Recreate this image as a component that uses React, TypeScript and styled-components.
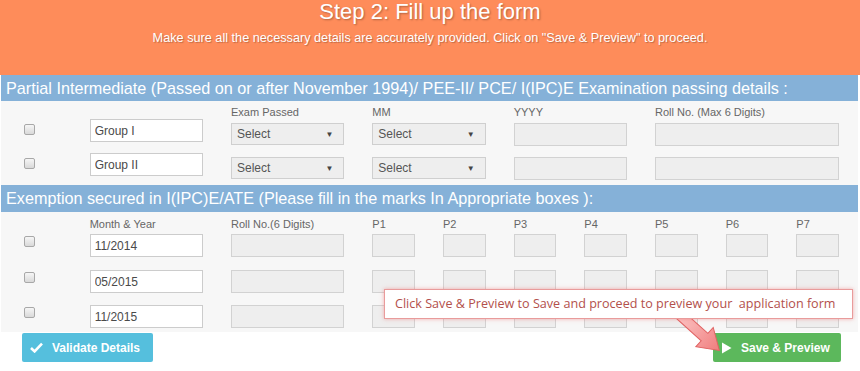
import React from "react";
import styled, { createGlobalStyle } from "styled-components";

const GlobalStyle = createGlobalStyle`
  body {
    margin: 0;
    background: #ffffff;
    font-family: "Liberation Sans", Arial, sans-serif;
  }
`;

const Page = styled.div`
  position: relative;
  width: 860px;
  height: 371px;
  overflow: hidden;
`;

const Header = styled.div`
  height: 75px;
  background: #fe8c5a;
  text-align: center;
  color: #ffffff;
`;

const Title = styled.h1`
  margin: 0;
  font-size: 22px;
  line-height: 24px;
  font-weight: normal;
  text-shadow: 1px 1px 2px rgba(0, 0, 0, 0.3);
`;

const Subtitle = styled.p`
  margin: 6px 0 0;
  font-size: 12.7px;
  line-height: 16px;
  text-shadow: 1px 1px 1px rgba(0, 0, 0, 0.25);
`;

const Panel = styled.div`
  margin: 0 2px 0 1px;
`;

const SectionBar = styled.div<{ $h: number }>`
  height: ${(p) => p.$h}px;
  line-height: ${(p) => p.$h}px;
  padding-left: 5px;
  background: #85b1d8;
  color: #ffffff;
  font-size: 16.2px;
  white-space: nowrap;
  overflow: hidden;
`;

const Body = styled.div`
  background: #f7f7f7;
  padding: 0 5px 0 4px;
`;

const Row = styled.div<{ $h: number }>`
  display: grid;
  grid-template-columns: repeat(12, 1fr);
  height: ${(p) => p.$h}px;
  align-items: start;
`;

const Cell = styled.div<{ $span?: number }>`
  grid-column: span ${(p) => p.$span ?? 1};
  padding: 0 14px;
  min-width: 0;
`;

const Label = styled.div<{ $top: number }>`
  margin-top: ${(p) => p.$top}px;
  font-size: 11px;
  line-height: 14px;
  color: #666666;
  white-space: nowrap;
`;

const Check = styled.input.attrs({ type: "checkbox" })<{ $top: number }>`
  appearance: none;
  display: block;
  margin: ${(p) => p.$top}px 0 0 5px;
  width: 11px;
  height: 11px;
  border: 1px solid #a8a8a8;
  border-radius: 2px;
  background: linear-gradient(#f6f6f6, #d9d9d9);
`;

const TextBox = styled.input<{ $top?: number }>`
  display: block;
  box-sizing: border-box;
  width: 100%;
  height: 23px;
  margin-top: ${(p) => p.$top ?? 0}px;
  padding: 0 4px;
  border: 1px solid #cccccc;
  background: #ffffff;
  font-family: "Liberation Sans", Arial, sans-serif;
  font-size: 12px;
  color: #4a4a4a;
  outline: none;
`;

const BlankBox = styled.div<{ $top?: number }>`
  box-sizing: border-box;
  height: 23px;
  margin-top: ${(p) => p.$top ?? 0}px;
  border: 1px solid #d2d2d2;
  background: #eeeeee;
`;

const SelectBox = styled.div<{ $top?: number }>`
  box-sizing: border-box;
  display: flex;
  align-items: center;
  justify-content: space-between;
  height: 22px;
  margin-top: ${(p) => p.$top ?? 0}px;
  padding: 0 10px 0 5px;
  border: 1px solid #cfcfcf;
  background: #eeeeee;
  font-size: 12px;
  color: #555555;
`;

const Caret = styled.span`
  font-size: 8px;
  color: #444444;
`;

const ButtonBar = styled.div`
  display: flex;
  justify-content: space-between;
  padding: 1px 19px 0 22px;
`;

const Button = styled.button<{ $bg: string; $w: number; $pad: number }>`
  display: flex;
  align-items: center;
  gap: 9px;
  width: ${(p) => p.$w}px;
  height: 29px;
  padding: 0 0 0 ${(p) => p.$pad}px;
  border: none;
  border-radius: 2px;
  background: ${(p) => p.$bg};
  color: #ffffff;
  font-family: "Liberation Sans", Arial, sans-serif;
  font-size: 12px;
  font-weight: bold;
`;

const Callout = styled.div`
  position: absolute;
  left: 384px;
  top: 289px;
  box-sizing: border-box;
  width: 469px;
  height: 30px;
  padding-left: 10px;
  line-height: 28px;
  border: 1px solid #e99b9b;
  background: #ffffff;
  box-shadow: 0 0 4px rgba(236, 110, 110, 0.55);
  color: #b3504b;
  font-family: "Open Sans", "Noto Sans", sans-serif;
  font-size: 12.6px;
  white-space: pre;
`;

const Arrow = styled.svg`
  position: absolute;
  left: 668px;
  top: 305px;
`;

const groupRows = ["Group I", "Group II"];
const exemptRows = ["11/2014", "05/2015", "11/2015"];
const papers = ["P1", "P2", "P3", "P4", "P5", "P6", "P7"];

export default function App() {
  return (
    <Page>
      <GlobalStyle />
      <Header>
        <Title>Step 2: Fill up the form</Title>
        <Subtitle>
          Make sure all the necessary details are accurately provided. Click on "Save &amp; Preview" to proceed.
        </Subtitle>
      </Header>

      <Panel>
        <SectionBar $h={26}>
          Partial Intermediate (Passed on or after November 1994)/ PEE-II/ PCE/ I(IPC)E Examination passing details :
        </SectionBar>
        <Body>
          <Row $h={18}>
            <Cell />
            <Cell $span={2} />
            <Cell $span={2}><Label $top={4}>Exam Passed</Label></Cell>
            <Cell $span={2}><Label $top={4}>MM</Label></Cell>
            <Cell $span={2}><Label $top={4}>YYYY</Label></Cell>
            <Cell $span={3}><Label $top={4}>Roll No. (Max 6 Digits)</Label></Cell>
          </Row>
          {groupRows.map((g, i) => (
            <Row key={g} $h={i === 0 ? 34 : 32}>
              <Cell><Check $top={5} /></Cell>
              <Cell $span={2}><TextBox defaultValue={g} /></Cell>
              <Cell $span={2}><SelectBox $top={4}>Select<Caret>▼</Caret></SelectBox></Cell>
              <Cell $span={2}><SelectBox $top={4}>Select<Caret>▼</Caret></SelectBox></Cell>
              <Cell $span={2}><BlankBox $top={4} /></Cell>
              <Cell $span={3}><BlankBox $top={4} /></Cell>
            </Row>
          ))}
        </Body>

        <SectionBar $h={27}>
          Exemption secured in I(IPC)E/ATE (Please fill in the marks In Appropriate boxes ):
        </SectionBar>
        <Body>
          <Row $h={22}>
            <Cell />
            <Cell $span={2}><Label $top={5}>Month &amp; Year</Label></Cell>
            <Cell $span={2}><Label $top={5}>Roll No.(6 Digits)</Label></Cell>
            {papers.map((p) => (
              <Cell key={p}><Label $top={5}>{p}</Label></Cell>
            ))}
          </Row>
          {exemptRows.map((d, i) => (
            <Row key={d} $h={[36, 35, 27][i]}>
              <Cell><Check $top={2} /></Cell>
              <Cell $span={2}><TextBox defaultValue={d} /></Cell>
              <Cell $span={2}><BlankBox /></Cell>
              {papers.map((p) => (
                <Cell key={p}><BlankBox /></Cell>
              ))}
            </Row>
          ))}
        </Body>
      </Panel>

      <ButtonBar>
        <Button $bg="#55bfdd" $w={131} $pad={8}>
          <svg width="13" height="11" viewBox="0 0 13 11">
            <path d="M1 6 L4.6 9.4 L12 1.6" stroke="#fff" strokeWidth="2.6" fill="none" />
          </svg>
          Validate Details
        </Button>
        <Button $bg="#5cb85c" $w={128} $pad={8}>
          <svg width="11" height="12" viewBox="0 0 11 12">
            <path d="M1 0.5 L10.5 6 L1 11.5 Z" fill="#fff" />
          </svg>
          Save &amp; Preview
        </Button>
      </ButtonBar>

      <Arrow width="64" height="60" viewBox="0 0 64 60">
        <defs>
          <linearGradient id="arrowFill" x1="0" y1="0" x2="1" y2="0">
            <stop offset="0" stopColor="#fbc4c4" />
            <stop offset="1" stopColor="#f07d7d" />
          </linearGradient>
        </defs>
        <g transform="translate(12,10) rotate(42)">
          <polygon
            points="0,-5 33,-5 33,-13 53,0 33,13 33,5 0,5"
            fill="url(#arrowFill)"
            stroke="#e06262"
            strokeWidth="1"
          />
        </g>
      </Arrow>
      <Callout>Click Save &amp; Preview to Save and proceed to preview your  application form</Callout>
    </Page>
  );
}
